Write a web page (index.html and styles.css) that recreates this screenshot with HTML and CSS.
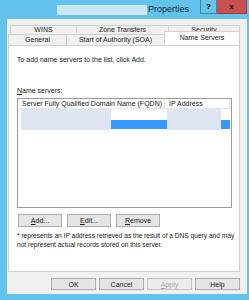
FILE: index.html
```html
<!DOCTYPE html>
<html>
<head>
<meta charset="utf-8">
<link rel="stylesheet" href="styles.css">
</head>
<body>
<div class="window">
  <div class="titlebar">
    <div class="title-blur"></div>
    <div class="title">Properties</div>
    <div class="caption-btns">
      <div class="cbtn help-btn">?</div>
      <div class="cbtn close-btn">x</div>
    </div>
  </div>
  <div class="client">
    <div class="tabs">
      <div class="tabrow row1">
        <div class="tab w-wins">WINS</div>
        <div class="tab w-zone">Zone Transfers</div>
        <div class="tab w-sec">Security</div>
      </div>
      <div class="tabrow row2">
        <div class="tab w-gen">General</div>
        <div class="tab w-soa">Start of Authority (SOA)</div>
        <div class="tab w-ns active">Name Servers</div>
      </div>
    </div>
    <div class="panel">
      <div class="intro">To add name servers to the list, click Add.</div>
      <div class="label"><u>N</u>ame servers:</div>
      <div class="listbox">
        <div class="lhead">
          <div class="hcol c1">Server Fully Qualified Domain Name (FQDN)</div>
          <div class="hcol c2">IP Address</div>
        </div>
        <div class="lbody">
          <div class="row-blank"></div>
          <div class="row-sel"></div>
          <div class="blur b1"></div>
          <div class="blur b2"></div>
        </div>
      </div>
      <div class="btnrow">
        <div class="btn"><u>A</u>dd...</div>
        <div class="btn"><u>E</u>dit...</div>
        <div class="btn"><u>R</u>emove</div>
      </div>
      <div class="note">* represents an IP address retrieved as the result of a DNS query and may not represent actual records stored on this server.</div>
    </div>
    <div class="footer">
      <div class="btn fbtn">OK</div>
      <div class="btn fbtn">Cancel</div>
      <div class="btn fbtn disabled"><u>A</u>pply</div>
      <div class="btn fbtn">Help</div>
    </div>
  </div>
</div>
</body>
</html>
```
FILE: styles.css
```css
html, body {
  margin: 0;
  padding: 0;
}
body {
  width: 249px;
  height: 300px;
  overflow: hidden;
  background: #64c3ec;
  font-family: "Liberation Sans", Arial, sans-serif;
  font-size: 7px;
  color: #1a1a1a;
}
.window {
  display: flex;
  flex-direction: column;
  width: 249px;
  height: 300px;
}
.titlebar {
  height: 19px;
  display: flex;
  align-items: flex-start;
  flex: none;
}
.title-blur {
  margin: 5px 0 0 57px;
  width: 90px;
  height: 10px;
  background: #c9e7f5;
  filter: blur(0.6px);
}
.title {
  margin: 4px 0 0 1px;
  font-size: 9px;
  line-height: 11px;
  color: #1e2a33;
}
.caption-btns {
  margin-left: auto;
  display: flex;
  margin-right: 2px;
}
.cbtn {
  height: 14px;
  box-sizing: border-box;
  display: flex;
  align-items: center;
  justify-content: center;
  font-weight: bold;
  font-size: 8px;
}
.help-btn {
  width: 17px;
  border: 1px solid #3e86a8;
  border-top: none;
  color: #000;
  background: #64c3ec;
}
.close-btn {
  width: 30px;
  background: #c75050;
  color: #1a1a1a;
  border: 1px solid #a23b3b;
  border-top: none;
  border-left: none;
}
.client {
  flex: 1;
  margin: 0 2px 6px 7px;
  background: #f0f0f0;
  padding: 6px 7px 0 1px;
  display: flex;
  flex-direction: column;
}
.tabs {
  display: flex;
  flex-direction: column;
}
.tabrow {
  display: flex;
}
.row1 {
  margin-left: 2px;
}
.tab {
  box-sizing: border-box;
  border: 1px solid #d0d0d0;
  border-bottom: none;
  border-right: none;
  background: #f0f0f0;
  text-align: center;
  font-size: 7px;
  color: #1a1a1a;
}
.tab:last-child {
  border-right: 1px solid #d0d0d0;
}
.row1 .tab {
  height: 9px;
  line-height: 8px;
}
.row2 .tab {
  height: 11px;
  line-height: 10px;
}
.w-wins { width: 66px; }
.w-zone { width: 92px; }
.w-sec { width: 72px; }
.w-gen { width: 58px; }
.w-soa { width: 98px; }
.w-ns { width: 76px; }
.tab.active {
  background: #ffffff;
  height: 14px;
  margin-top: -3px;
  line-height: 11px;
  position: relative;
  z-index: 2;
  margin-bottom: -1px;
}
.panel {
  box-sizing: border-box;
  height: 227px;
  width: 232px;
  border: 1px solid #d0d0d0;
  background: #ffffff;
  padding: 9px 0 0 8px;
  display: flex;
  flex-direction: column;
}
.intro {
  line-height: 9px;
}
.label {
  margin-top: 22px;
  line-height: 9px;
}
.listbox {
  margin-top: 3px;
  width: 215px;
  height: 110px;
  box-sizing: border-box;
  border: 1px solid #9b9b9b;
  background: #fff;
}
.lhead {
  display: flex;
  height: 9px;
  border-bottom: 1px solid #e5e5e5;
  width: 212px;
}
.hcol {
  box-sizing: border-box;
  line-height: 9px;
  padding-left: 4px;
  border-right: 1px solid #e5e5e5;
  white-space: nowrap;
  overflow: hidden;
}
.c1 { width: 147px; }
.c2 { width: 65px; }
.lbody {
  position: relative;
  padding-left: 3px;
}
.row-blank {
  height: 11px;
}
.row-sel {
  width: 209px;
  height: 9px;
  background: #3399ff;
}
.blur {
  position: absolute;
  top: 0;
  height: 21px;
  background: #dfe5f3;
  filter: blur(0.5px);
}
.b1 { left: 3px; width: 90px; }
.b2 { left: 149px; width: 54px; }
.btnrow {
  display: flex;
  gap: 5px;
  margin-top: 6px;
  margin-left: 1px;
}
.btn {
  box-sizing: border-box;
  height: 13px;
  width: 44px;
  border: 1px solid #acacac;
  background: #e5e5e5;
  display: flex;
  align-items: center;
  justify-content: center;
  font-size: 7px;
  color: #1a1a1a;
}
.note {
  margin-top: 4px;
  line-height: 9px;
  font-size: 6.6px;
  width: 218px;
}
.footer {
  display: flex;
  justify-content: flex-end;
  gap: 3px;
  margin-top: 6px;
}
.fbtn {
  width: 45px;
  height: 12px;
}
.fbtn.disabled {
  color: #a8a8a8;
  border-color: #c4c4c4;
  background: #ececec;
}
```
